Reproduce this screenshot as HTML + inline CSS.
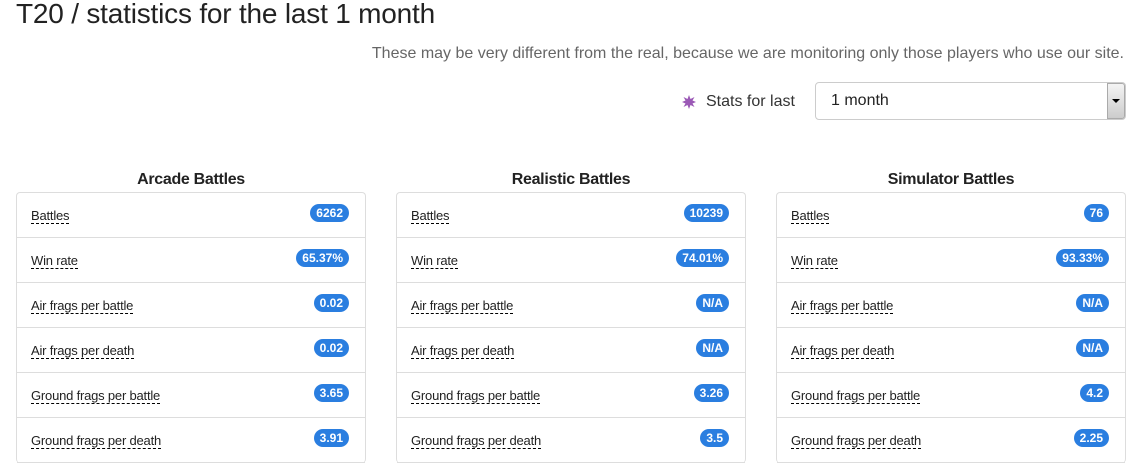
<!DOCTYPE html>
<html><head><style>
body{margin:0;width:1140px;height:461px;overflow:hidden;background:#fff;font-family:"Liberation Sans",sans-serif;color:#222;position:relative}
h1{position:absolute;left:16px;top:-2px;margin:0;font-weight:400;font-size:28px;color:#222;letter-spacing:-0.2px}
.sub{position:absolute;right:16px;top:45px;font-size:16px;color:#666}
.lab{position:absolute;left:706px;top:93px;font-size:16px;color:#333}
.star{position:absolute;left:682px;top:95px;width:14px;height:14px}
.sel{position:absolute;left:815px;top:82px;width:309px;height:36px;border:1px solid #ccc;border-radius:4px;font-size:16px}
.sel span{position:absolute;left:15px;top:9px}
.arr{position:absolute;right:0;top:0;width:16px;height:34px;background:linear-gradient(#f4f4f4,#ccc);border:1px solid #aaa;border-radius:0 3px 3px 0}
.arr:after{content:"";position:absolute;left:4px;top:15px;border:4px solid transparent;border-top-color:#000;border-bottom:0}
.col{position:absolute;top:170px;width:350px}
.col h2{margin:0;text-align:center;font-size:16px;font-weight:700;height:22px;line-height:19px;letter-spacing:-0.3px}
.box{border:1px solid #ddd;border-radius:4px;border-bottom:none}
.row{height:44px;border-bottom:1px solid #ddd;position:relative;font-size:13px}
.row .t{position:absolute;left:14px;top:15px;border-bottom:1px dashed #000;line-height:15px;letter-spacing:-0.2px}
.b{position:absolute;right:16px;top:11px;background:#2a7ee0;color:#fff;font-weight:700;font-size:12px;border-radius:9px;padding:2px 6px;line-height:14px}
</style></head><body>
<h1>T20 / statistics for the last 1 month</h1>
<div class="sub">These may be very different from the real, because we are monitoring only those players who use our site.</div>
<svg class="star" viewBox="0 0 14 14"><polygon fill="#9b59b6" points="7,0 8.5,4 12.5,2 10.5,5.5 14,7 10.5,8.5 12.5,12 8.5,10 7,14 5.5,10 1.5,12 3.5,8.5 0,7 3.5,5.5 1.5,2 5.5,4"/></svg>
<div class="lab">Stats for last</div>
<div class="sel"><span>1 month</span><div class="arr"></div></div>

<div class="col" style="left:16px"><h2>Arcade Battles</h2><div class="box">
<div class="row"><span class="t">Battles</span><span class="b">6262</span></div>
<div class="row"><span class="t">Win rate</span><span class="b">65.37%</span></div>
<div class="row"><span class="t">Air frags per battle</span><span class="b">0.02</span></div>
<div class="row"><span class="t">Air frags per death</span><span class="b">0.02</span></div>
<div class="row"><span class="t">Ground frags per battle</span><span class="b">3.65</span></div>
<div class="row"><span class="t">Ground frags per death</span><span class="b">3.91</span></div>
</div></div>

<div class="col" style="left:396px"><h2>Realistic Battles</h2><div class="box">
<div class="row"><span class="t">Battles</span><span class="b">10239</span></div>
<div class="row"><span class="t">Win rate</span><span class="b">74.01%</span></div>
<div class="row"><span class="t">Air frags per battle</span><span class="b">N/A</span></div>
<div class="row"><span class="t">Air frags per death</span><span class="b">N/A</span></div>
<div class="row"><span class="t">Ground frags per battle</span><span class="b">3.26</span></div>
<div class="row"><span class="t">Ground frags per death</span><span class="b">3.5</span></div>
</div></div>

<div class="col" style="left:776px"><h2>Simulator Battles</h2><div class="box">
<div class="row"><span class="t">Battles</span><span class="b">76</span></div>
<div class="row"><span class="t">Win rate</span><span class="b">93.33%</span></div>
<div class="row"><span class="t">Air frags per battle</span><span class="b">N/A</span></div>
<div class="row"><span class="t">Air frags per death</span><span class="b">N/A</span></div>
<div class="row"><span class="t">Ground frags per battle</span><span class="b">4.2</span></div>
<div class="row"><span class="t">Ground frags per death</span><span class="b">2.25</span></div>
</div></div>
</body></html>
